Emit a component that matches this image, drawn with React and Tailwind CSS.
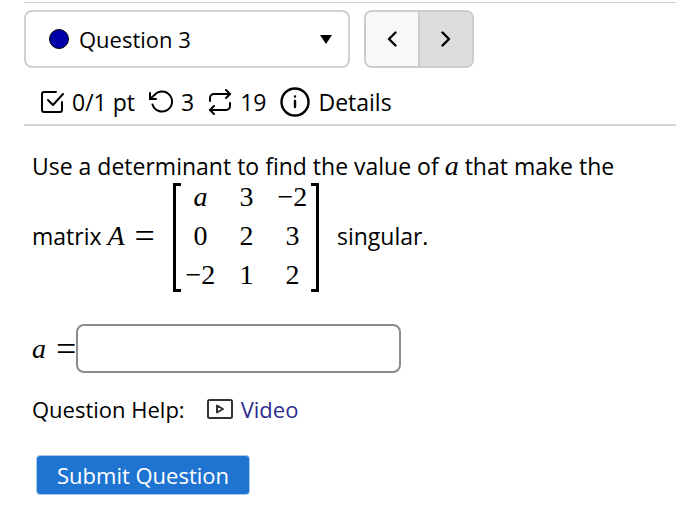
import { useState } from "react";

const rows = [
  ["a", "3", "−2"],
  ["0", "2", "3"],
  ["−2", "1", "2"],
];

const Var = ({ children }) => (
  <i className="font-['Liberation_Serif',serif] text-[28px] leading-6">{children}</i>
);

const Equals = () => (
  <span className="font-['Liberation_Serif',serif] text-4xl leading-6">=</span>
);

const iconProps = {
  fill: "none",
  stroke: "currentColor",
  strokeLinecap: "round",
  strokeLinejoin: "round",
  "aria-hidden": true,
};

const Matrix = () => (
  <div className="flex">
    <div className="w-2 border-3 border-r-0 border-black"></div>
    <table className="-mx-1 -mt-1.5 -mb-0.5 font-['Liberation_Serif',serif] text-[28px] leading-9 text-center">
      <tbody>
        {rows.map((row, i) => (
          <tr key={i} className="h-[39px]">
            {row.map((cell, j) => (
              <td key={j} className="w-[46px] min-w-[46px] p-0 pl-px">
                {cell === "a" ? <Var>a</Var> : cell}
              </td>
            ))}
          </tr>
        ))}
      </tbody>
    </table>
    <div className="w-2 border-3 border-l-0 border-black"></div>
  </div>
);

const App = () => {
  const [question, setQuestion] = useState("3");
  const [answer, setAnswer] = useState("");

  return (
    <main className="min-h-screen bg-white px-6 pt-[2px] font-['Open_Sans',sans-serif] text-[22px] leading-7 text-black">
      {/* Question picker */}
      <div className="flex gap-3.5 border-t border-[#ccc] pt-[7px]">
        <div className="flex h-[58px] w-1/2 items-center gap-2.5 rounded-lg border-2 border-[#d0d0d0] pl-[23px] pr-4">
          <span className="size-5 shrink-0 rounded-full border border-black bg-[#0000a8]"></span>
          <select
            aria-label="Question"
            value={question}
            onChange={(e) => setQuestion(e.target.value)}
            className="min-w-0 flex-1 appearance-none bg-transparent outline-none"
          >
            <option value="3">Question 3</option>
          </select>
          <svg viewBox="0 0 12 9" className="h-[9px] w-3" aria-hidden="true">
            <path d="M0 0h12L6 9z" />
          </svg>
        </div>
        <div className="flex h-[58px] overflow-hidden rounded-lg border-2 border-[#ccc]">
          <button aria-label="Previous question" className="flex w-[52px] items-center justify-center bg-[#f8f8f8]">
            <svg viewBox="0 0 10 16" className="h-4 w-2.5" {...iconProps} strokeWidth="2.4">
              <path d="M8.5 1.5 2 8l6.5 6.5" />
            </svg>
          </button>
          <button aria-label="Next question" className="flex w-[54px] items-center justify-center border-l-2 border-[#ccc] bg-[#ddd]">
            <svg viewBox="0 0 10 16" className="h-4 w-2.5" {...iconProps} strokeWidth="2.4">
              <path d="M1.5 1.5 8 8l-6.5 6.5" />
            </svg>
          </button>
        </div>
      </div>

      {/* Score, tries and versions */}
      <div className="flex h-[58px] items-center gap-3.5 border-b-2 border-[#d4d4d4] pt-3 pl-4 text-[23px]">
        <span className="flex items-center gap-2">
          <svg viewBox="0 0 24 24" className="size-6" {...iconProps} strokeWidth="2">
            <path d="M16 2H4a2 2 0 0 0-2 2v16a2 2 0 0 0 2 2h16a2 2 0 0 0 2-2v-8" />
            <path d="m8 10 5 5L23 4" />
          </svg>
          0/1 pt
        </span>
        <span className="flex items-center gap-2">
          <svg viewBox="0 0 24 24" className="size-6" {...iconProps} strokeWidth="2">
            <path d="M1 3v6h6" />
            <path d="M3.5 14.5A10 10 0 1 0 5.5 5L1 9" />
          </svg>
          3
        </span>
        <span className="flex items-center gap-2">
          <svg viewBox="0 0 24 26" className="h-[26px] w-6" {...iconProps} strokeWidth="2">
            <path d="m18 1 4 4-4 4" />
            <path d="M2 12V9a4 4 0 0 1 4-4h16" />
            <path d="m6 25-4-4 4-4" />
            <path d="M22 14v3a4 4 0 0 1-4 4H2" />
          </svg>
          19
        </span>
        <button className="flex items-center gap-2">
          <svg viewBox="0 0 30 30" className="size-[30px]" {...iconProps} strokeWidth="2.4">
            <circle cx="15" cy="15" r="13.5" />
            <path d="M15 14v6M15 9.5v.1" />
          </svg>
          Details
        </button>
      </div>

      {/* Problem */}
      <div className="px-2 pt-6">
        <div className="text-[23px]">
          <p className="leading-8">
            Use a determinant to find the value of <Var>a</Var> that make the
          </p>
          <div className="mt-px flex items-center gap-[18px]">
            <span className="flex items-center gap-2.5 pb-1">
              <span>
                matrix <Var>A</Var>
              </span>
              <Equals />
            </span>
            <Matrix />
            <span className="pb-1">singular.</span>
          </div>
        </div>

        <div className="mt-8 flex items-center">
          <label htmlFor="answer" className="flex items-center gap-2.5">
            <Var>a</Var> <Equals />
          </label>
          <input
            id="answer"
            type="text"
            value={answer}
            onChange={(e) => setAnswer(e.target.value)}
            className="h-[49px] w-[51%] rounded-lg border-2 border-[#8c8c8c] px-2"
          />
        </div>

        <p className="mt-[22px] flex items-center gap-[22px]">
          Question Help:
          <a href="#video" className="flex items-center gap-2 text-[#2d2d8f]">
            <svg viewBox="0 0 26 20" className="h-5 w-[26px] text-[#333]" {...iconProps} strokeWidth="2">
              <rect x="1" y="1" width="24" height="18" rx="1.5" />
              <path d="M10 6.5v7l6-3.5z" />
            </svg>
            Video
          </a>
        </p>

        <button className="mt-8 ml-1 h-10 rounded border border-[#a8caee] bg-[#1f74d1] px-5 text-white">
          Submit Question
        </button>
      </div>
    </main>
  );
};

export default App;
